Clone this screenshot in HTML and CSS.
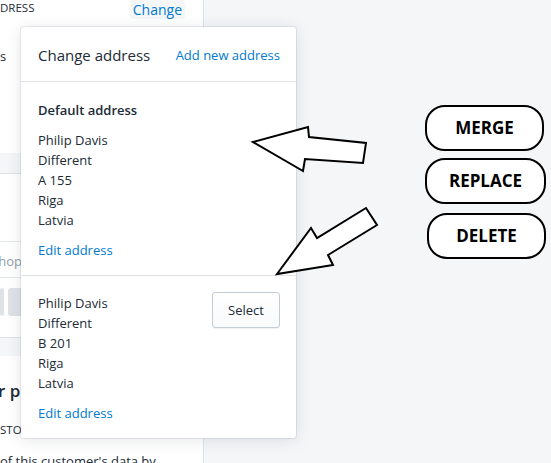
FILE: index.html
```html
<!DOCTYPE html>
<html>
<head>
<meta charset="utf-8">
<link rel="stylesheet" href="styles.css">
</head>
<body>
<div class="page">
  <div class="column">
    <div class="card card-address">
      <div class="row-head">
        <span class="caps">DRESS</span>
        <span class="link-btn">Change</span>
      </div>
      <div class="frag">s</div>
    </div>
    <div class="gap"></div>
    <div class="card card-tags">
      <div class="faint">View all tags</div>
      <div class="input">shoppers</div>
      <div class="pills">
        <span class="pill pill-small"></span>
        <span class="pill">Cu</span>
      </div>
    </div>
    <div class="gap gap2"></div>
    <div class="card card-privacy">
      <div class="priv-title">r pri</div>
      <div class="caps priv-caps">STO</div>
      <div class="priv-text">of this customer's data by</div>
    </div>
  </div>

  <div class="popover">
    <div class="pop-head">
      <span class="pop-title">Change address</span>
      <span class="link">Add new address</span>
    </div>
    <div class="pop-section">
      <div class="sec-title">Default address</div>
      <div class="addr">
        <div>Philip Davis</div>
        <div>Different</div>
        <div>A 155</div>
        <div>Riga</div>
        <div>Latvia</div>
      </div>
      <div class="link">Edit address</div>
    </div>
    <div class="pop-section pop-section-last">
      <div class="sec-row">
        <div class="addr">
          <div>Philip Davis</div>
          <div>Different</div>
          <div>B 201</div>
          <div>Riga</div>
          <div>Latvia</div>
        </div>
        <button class="select-btn">Select</button>
      </div>
      <div class="link">Edit address</div>
    </div>
  </div>

  <svg class="arrows" width="551" height="463" viewBox="0 0 551 463">
    <polygon points="253,142 308,127 309,137 366,143 363,163 305,159 303,171" fill="#fff" stroke="#000" stroke-width="2" stroke-linejoin="miter"/>
    <polygon points="277,274 311,228 317,238 366,208 377,225 328,255 333,265" fill="#fff" stroke="#000" stroke-width="2" stroke-linejoin="miter"/>
  </svg>

  <div class="actions">
    <div class="action action-merge">MERGE</div>
    <div class="action action-replace">REPLACE</div>
    <div class="action action-delete">DELETE</div>
  </div>
</div>
</body>
</html>
```

FILE: styles.css
```css
* { box-sizing: border-box; }
html, body { margin: 0; padding: 0; }
body {
  background: #f4f6f8;
  font-family: "Open Sans", "Noto Sans", sans-serif;
  font-size: 13px;
  line-height: 20px;
  color: #212b36;
  width: 551px;
  height: 463px;
  overflow: hidden;
}
.page { position: relative; width: 551px; height: 463px; }
.column {
  width: 204px;
  height: 463px;
  border-right: 1px solid #dfe3e8;
  display: flex;
  flex-direction: column;
  overflow: hidden;
}
.card { background: #fff; flex-shrink: 0; }
.card-address { height: 153px; }
.row-head {
  display: flex;
  justify-content: space-between;
  align-items: flex-start;
  padding-right: 18px;
}
.caps { font-size: 11.5px; line-height: 16px; text-transform: uppercase; }
.link-btn {
  color: #007ace;
  background: #f4f6f8;
  padding: 0 3px;
  border-radius: 3px;
  line-height: 19px;
  font-size: 14px;
}
.frag { margin-top: 27px; }
.gap { height: 21px; flex-shrink: 0; border-bottom: 1px solid #dfe3e8; background: #f4f6f8; }
.gap2 { height: 19px; border-bottom: 0; border-top: 1px solid #dfe3e8; }
.card-tags { height: 163px; position: relative; }
.faint { color: #f7f8fa; padding: 25px 0 0 107px; }
.input {
  margin-top: 22px;
  width: 184px;
  height: 37px;
  border: 1px solid #e4e8eb;
  border-left: 0;
  color: #919eab;
  padding: 9px 0 0 0;
  text-indent: -8px;
  overflow: hidden;
  white-space: nowrap;
}
.pills { display: flex; gap: 4px; margin-top: 10px; }
.pill {
  background: #dfe3e8;
  border-radius: 3px;
  height: 28px;
  padding: 4px 8px 4px 16px;
  color: #454f5b;
  width: 92px;
}
.pill-small { width: 4px; padding: 0; }
.card-privacy { flex: 1 1 auto; min-height: 0; overflow: hidden; padding-top: 23px; }
.priv-title { font-size: 17px; font-weight: 600; line-height: 24px; white-space: nowrap; margin-left: -2px; }
.priv-caps { margin-top: 19px; }
.priv-text { margin-top: 13px; white-space: nowrap; }

.popover {
  position: absolute;
  left: 21px;
  top: 27px;
  width: 275px;
  height: 411px;
  background: #fff;
  border-radius: 3px;
  box-shadow: 0 0 0 1px rgba(6, 44, 82, 0.08), 0 2px 16px rgba(33, 43, 55, 0.12);
  display: flex;
  flex-direction: column;
}
.pop-head {
  height: 57px;
  display: flex;
  align-items: center;
  justify-content: space-between;
  padding: 1px 16px 0 17px;
  border-bottom: 1px solid #dfe3e8;
}
.pop-title { font-size: 15px; line-height: 24px; }
.link { color: #007ace; }
.pop-section {
  padding: 18px 16px 15px 17px;
  border-bottom: 1px solid #dfe3e8;
  display: flex;
  flex-direction: column;
  gap: 10px;
}
.pop-section-last { border-bottom: 0; padding-top: 17px; }
.sec-title { font-weight: 600; }
.sec-row { display: flex; justify-content: space-between; align-items: flex-start; }
.select-btn {
  font-family: inherit;
  font-size: 13px;
  color: #212b36;
  width: 68px;
  height: 36px;
  margin-top: -1px;
  border: 1px solid #c4cdd5;
  border-radius: 3px;
  background: linear-gradient(#fff, #f9fafb);
  box-shadow: 0 1px 0 rgba(22, 29, 37, 0.05);
  padding: 0;
}

.arrows { position: absolute; left: 0; top: 0; pointer-events: none; }

.actions { position: absolute; left: 425px; top: 105px; width: 121px; }
.action {
  border: 2px solid #000;
  border-radius: 20px;
  background: #fff;
  height: 46px;
  display: flex;
  align-items: center;
  justify-content: center;
  font-weight: 700;
  font-size: 17px;
  color: #000;
}
.action-merge { width: 119px; }
.action-replace { width: 121px; margin-top: 7px; }
.action-delete { width: 119px; margin-left: 2px; margin-top: 9px; }
```
